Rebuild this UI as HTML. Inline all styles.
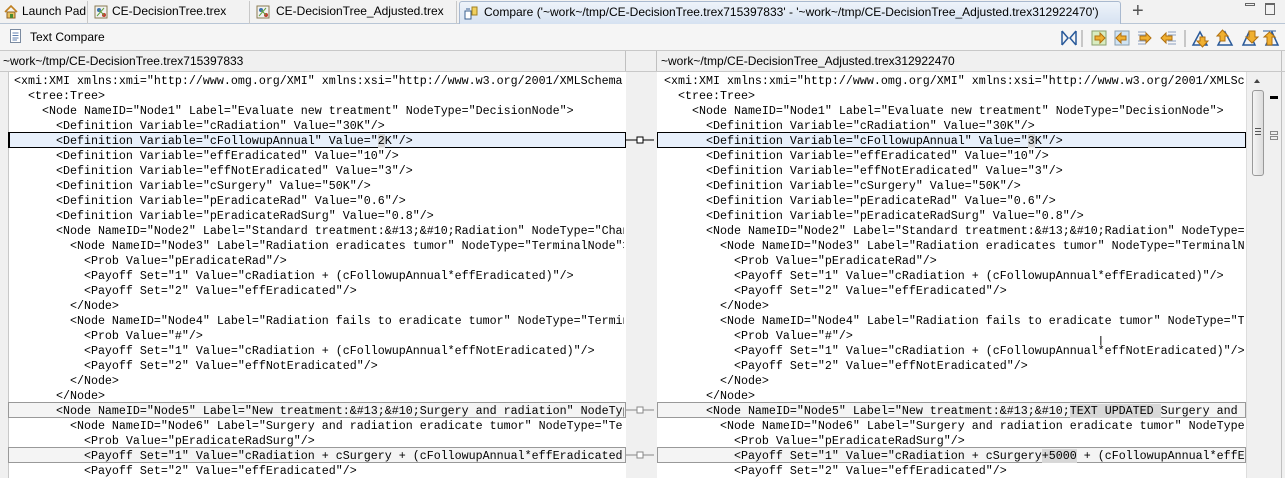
<!DOCTYPE html>
<html><head><meta charset="utf-8"><style>
*{margin:0;padding:0;box-sizing:border-box}
body{width:1285px;height:478px;overflow:hidden;background:#f0f0f0;font-family:"Liberation Sans",sans-serif;font-size:12px;color:#000;position:relative}
.abs{position:absolute}
.tabbar{left:0;top:0;width:1285px;height:24px;background:#f2f2f2;border-bottom:1px solid #b9c6d6}
.tab{top:1px;height:23px;line-height:21px;font-size:12px;padding-left:22px;border-right:1px solid #c8c8c8}
.ico{position:absolute;left:4px;top:4px;width:14px;height:14px}
.code{font-family:"Liberation Mono",monospace;font-size:11.67px;line-height:15px;white-space:pre;color:#000}
.pane{background:#fff;overflow:hidden}
.hl{background:#e8f0fb;border:1px solid #000}
.hl2{background:#f4f4f4;border:1px solid #999}
.gr{background:#d8d8d8}
</style></head><body>
<div class="abs tabbar"></div>
<div class="abs tab" style="left:0;width:88px;"><svg class="ico" viewBox="0 0 14 14"><path d="M1 7L7 1L13 7" fill="none" stroke="#c08020" stroke-width="1.6"/><rect x="3" y="7" width="8" height="6" fill="#e8c060" stroke="#906020"/><rect x="6" y="9" width="3" height="4" fill="#4a8a30"/></svg>Launch Pad</div>
<div class="abs tab" style="left:90px;width:160px;"><svg class="ico" viewBox="0 0 14 14"><rect x="1" y="1" width="12" height="12" fill="none" stroke="#8a7a50"/><circle cx="5" cy="5" r="2" fill="#3a70b0"/><circle cx="10" cy="10" r="2" fill="#c04030"/><path d="M5 5L10 10M3 11L10 3" stroke="#60a040"/></svg>CE-DecisionTree.trex</div>
<div class="abs tab" style="left:252px;width:205px;padding-left:24px"><svg class="ico" viewBox="0 0 14 14"><rect x="1" y="1" width="12" height="12" fill="none" stroke="#8a7a50"/><circle cx="5" cy="5" r="2" fill="#3a70b0"/><circle cx="10" cy="10" r="2" fill="#c04030"/><path d="M5 5L10 10M3 11L10 3" stroke="#60a040"/></svg>CE-DecisionTree_Adjusted.trex</div>
<div class="abs tab" style="left:459px;width:662px;background:linear-gradient(#eef3fa,#d6e2f1);border:1px solid #a9b9cf;border-bottom:none;padding-left:24px;border-radius:3px 3px 0 0"><svg class="ico" viewBox="0 0 14 14"><rect x="1" y="5" width="6" height="8" fill="#fff" stroke="#3a6090"/><rect x="8" y="1" width="5" height="8" fill="#f0d060" stroke="#a08020"/><path d="M2 3H6" stroke="#3a6090"/></svg>Compare ('~work~/tmp/CE-DecisionTree.trex715397833' - '~work~/tmp/CE-DecisionTree_Adjusted.trex312922470') <span style="margin-left:10px;color:#777">✕</span></div>
<div class="abs" style="left:1132px;top:0;font-size:20px;line-height:22px;color:#555">+</div>
<div class="abs" style="left:1245px;top:3px;width:10px;height:3px;border:1px solid #666"></div>
<div class="abs" style="left:1265px;top:3px;width:10px;height:12px;border:1px solid #666;border-top-width:2px"></div>

<div class="abs" style="left:0;top:24px;width:1285px;height:26px;background:#f5f5f5"></div>
<svg class="abs" style="left:10px;top:29px" width="12" height="14" viewBox="0 0 12 14"><rect x="0.5" y="0.5" width="10" height="13" fill="#fff" stroke="#7a8aa0"/><path d="M2.5 4H8.5M2.5 6.5H8.5M2.5 9H8.5M2.5 11H7" stroke="#6080b0"/></svg>
<div class="abs" style="left:30px;top:30px;font-size:12px">Text Compare</div>
<svg class="abs" style="left:1058px;top:27px" width="227" height="22" viewBox="0 0 227 22">
<path d="M4 4V18M4 4L10 11L4 18M18 4V18M18 4L12 11L18 18" fill="none" stroke="#2a5a9a" stroke-width="1.5"/>
<path d="M24 3V20" stroke="#999"/>
<rect x="34" y="4" width="14" height="14" fill="#d8ecc0" stroke="#8aa070"/><path d="M37 9H42V6L47 11L42 16V13H37Z" fill="#f0b030" stroke="#b07010"/>
<rect x="57" y="4" width="14" height="14" fill="#d0e4f4" stroke="#8aa0b0"/><path d="M68 9H63V6L58 11L63 16V13H68Z" fill="#f0b030" stroke="#b07010"/>
<path d="M80 5H88M80 8H88M80 14H88M80 17H88" stroke="#8aa0c0"/><path d="M82 9H88V6L93 11L88 16V13H82Z" fill="#f0b030" stroke="#b07010"/>
<path d="M110 5H118M110 8H118M110 14H118M110 17H118" stroke="#8aa0c0"/><path d="M114 9H108V6L103 11L108 16V13H114Z" fill="#f0b030" stroke="#b07010"/>
<path d="M127 3V20" stroke="#999"/>
<path d="M135 18L142 5L149 18Z" fill="none" stroke="#2a5a9a" stroke-width="1.5"/><path d="M142 10H147V14H150L144.5 20L139 14H142Z" fill="#f0b030" stroke="#b07010"/>
<path d="M160 18L167 5L174 18Z" fill="none" stroke="#2a5a9a" stroke-width="1.5"/><path d="M162 14V9H159L164.5 3L170 9H167V14Z" fill="#f0b030" stroke="#b07010"/>
<path d="M185 18L191 5L197 18Z" fill="none" stroke="#2a5a9a" stroke-width="1.5"/><path d="M191 4H197V10H200L194 16L188 10H191Z" fill="#f0b030" stroke="#b07010"/>
<path d="M208 18L214 5L220 18Z" fill="none" stroke="#2a5a9a" stroke-width="1.5"/><path d="M209 18V10H206L211.5 5L217 10H214V18Z" fill="#f0b030" stroke="#b07010"/><path d="M205 4H218" stroke="#2a5a9a"/>
</svg>

<div class="abs" style="left:0;top:50px;width:1285px;height:1px;background:#c8c8c8"></div>
<div class="abs" style="left:3px;top:51px;width:623px;height:21px;background:#f0f0f0;border-right:1px solid #c0c0c0;line-height:21px;font-size:12px">~work~/tmp/CE-DecisionTree.trex715397833</div>
<div class="abs" style="left:656px;top:51px;width:625px;height:21px;background:#f0f0f0;border-left:1px solid #c0c0c0;line-height:21px;font-size:12px;padding-left:4px">~work~/tmp/CE-DecisionTree_Adjusted.trex312922470</div>
<div class="abs" style="left:1281px;top:51px;width:1px;height:427px;background:#c0c0c0"></div>
<div class="abs" style="left:0;top:71px;width:1285px;height:1px;background:#c8c8c8"></div>

<div class="abs pane" style="left:8px;top:72px;width:618px;height:406px;border-left:1px solid #c8c8c8"></div>
<div class="abs hl" style="left:8px;top:132px;width:618px;height:16px"></div>
<div class="abs" style="left:9px;top:133px;width:2px;height:14px;border-left:1px solid #000"></div>
<div class="abs hl2" style="left:8px;top:402px;width:618px;height:16px"></div>
<div class="abs hl2" style="left:8px;top:447px;width:618px;height:16px"></div>
<div class="abs code" style="left:14px;top:74px;width:610px;height:404px;overflow:hidden">&lt;xmi:XMI xmlns:xmi="http://www.omg.org/XMI" xmlns:xsi="http://www.w3.org/2001/XMLSchema-instance"
  &lt;tree:Tree&gt;
    &lt;Node NameID="Node1" Label="Evaluate new treatment" NodeType="DecisionNode"&gt;
      &lt;Definition Variable="cRadiation" Value="30K"/&gt;
      &lt;Definition Variable="cFollowupAnnual" Value="<span class="gr">2</span>K"/&gt;
      &lt;Definition Variable="effEradicated" Value="10"/&gt;
      &lt;Definition Variable="effNotEradicated" Value="3"/&gt;
      &lt;Definition Variable="cSurgery" Value="50K"/&gt;
      &lt;Definition Variable="pEradicateRad" Value="0.6"/&gt;
      &lt;Definition Variable="pEradicateRadSurg" Value="0.8"/&gt;
      &lt;Node NameID="Node2" Label="Standard treatment:&amp;#13;&amp;#10;Radiation" NodeType="ChanceNode"&gt;
        &lt;Node NameID="Node3" Label="Radiation eradicates tumor" NodeType="TerminalNode"&gt;
          &lt;Prob Value="pEradicateRad"/&gt;
          &lt;Payoff Set="1" Value="cRadiation + (cFollowupAnnual*effEradicated)"/&gt;
          &lt;Payoff Set="2" Value="effEradicated"/&gt;
        &lt;/Node&gt;
        &lt;Node NameID="Node4" Label="Radiation fails to eradicate tumor" NodeType="TerminalNode"&gt;
          &lt;Prob Value="#"/&gt;
          &lt;Payoff Set="1" Value="cRadiation + (cFollowupAnnual*effNotEradicated)"/&gt;
          &lt;Payoff Set="2" Value="effNotEradicated"/&gt;
        &lt;/Node&gt;
      &lt;/Node&gt;
      &lt;Node NameID="Node5" Label="New treatment:&amp;#13;&amp;#10;Surgery and radiation" NodeType="ChanceNode"&gt;
        &lt;Node NameID="Node6" Label="Surgery and radiation eradicate tumor" NodeType="TerminalNode"&gt;
          &lt;Prob Value="pEradicateRadSurg"/&gt;
          &lt;Payoff Set="1" Value="cRadiation + cSurgery + (cFollowupAnnual*effEradicated)"/&gt;
          &lt;Payoff Set="2" Value="effEradicated"/&gt;</div>

<svg class="abs" style="left:624px;top:130px" width="34" height="340" viewBox="0 0 34 340">
<path d="M2 10H30" stroke="#000"/><rect x="13" y="7" width="6" height="6" fill="#fff" stroke="#000"/>
<path d="M2 280H30" stroke="#888"/><rect x="13" y="277" width="6" height="6" fill="#fff" stroke="#888"/>
<path d="M2 325H30" stroke="#888"/><rect x="13" y="322" width="6" height="6" fill="#fff" stroke="#888"/>
</svg>

<div class="abs pane" style="left:657px;top:72px;width:589px;height:406px"></div>
<div class="abs hl" style="left:657px;top:132px;width:589px;height:16px"></div>
<div class="abs hl2" style="left:657px;top:402px;width:589px;height:16px"></div>
<div class="abs hl2" style="left:657px;top:447px;width:589px;height:16px"></div>
<div class="abs code" style="left:664px;top:74px;width:580px;height:404px;overflow:hidden">&lt;xmi:XMI xmlns:xmi="http://www.omg.org/XMI" xmlns:xsi="http://www.w3.org/2001/XMLSchema-instance"
  &lt;tree:Tree&gt;
    &lt;Node NameID="Node1" Label="Evaluate new treatment" NodeType="DecisionNode"&gt;
      &lt;Definition Variable="cRadiation" Value="30K"/&gt;
      &lt;Definition Variable="cFollowupAnnual" Value="<span class="gr">3</span>K"/&gt;
      &lt;Definition Variable="effEradicated" Value="10"/&gt;
      &lt;Definition Variable="effNotEradicated" Value="3"/&gt;
      &lt;Definition Variable="cSurgery" Value="50K"/&gt;
      &lt;Definition Variable="pEradicateRad" Value="0.6"/&gt;
      &lt;Definition Variable="pEradicateRadSurg" Value="0.8"/&gt;
      &lt;Node NameID="Node2" Label="Standard treatment:&amp;#13;&amp;#10;Radiation" NodeType="ChanceNode"&gt;
        &lt;Node NameID="Node3" Label="Radiation eradicates tumor" NodeType="TerminalNode"&gt;
          &lt;Prob Value="pEradicateRad"/&gt;
          &lt;Payoff Set="1" Value="cRadiation + (cFollowupAnnual*effEradicated)"/&gt;
          &lt;Payoff Set="2" Value="effEradicated"/&gt;
        &lt;/Node&gt;
        &lt;Node NameID="Node4" Label="Radiation fails to eradicate tumor" NodeType="TerminalNode"&gt;
          &lt;Prob Value="#"/&gt;
          &lt;Payoff Set="1" Value="cRadiation + (cFollowupAnnual*effNotEradicated)"/&gt;
          &lt;Payoff Set="2" Value="effNotEradicated"/&gt;
        &lt;/Node&gt;
      &lt;/Node&gt;
      &lt;Node NameID="Node5" Label="New treatment:&amp;#13;&amp;#10;<span class="gr">TEXT UPDATED </span>Surgery and radiation" NodeType="ChanceNode"&gt;
        &lt;Node NameID="Node6" Label="Surgery and radiation eradicate tumor" NodeType="TerminalNode"&gt;
          &lt;Prob Value="pEradicateRadSurg"/&gt;
          &lt;Payoff Set="1" Value="cRadiation + cSurgery<span class="gr">+5000</span> + (cFollowupAnnual*effEradicated)"/&gt;
          &lt;Payoff Set="2" Value="effEradicated"/&gt;</div>
<div class="abs" style="left:1099px;top:333px;font-size:13px;color:#333">I</div>

<div class="abs" style="left:1246px;top:72px;width:21px;height:406px;background:#f0f0f0;border-left:1px solid #ddd"></div>
<div class="abs" style="left:1254px;top:79px;width:0;height:0;border:3px solid transparent;border-bottom:4px solid #444;border-top:none"></div>
<div class="abs" style="left:1252px;top:90px;width:12px;height:86px;border:1px solid #999;border-radius:3px;background:linear-gradient(90deg,#f4f4f4,#dcdcdc)"></div>
<div class="abs" style="left:1255px;top:128px;width:6px;height:1px;background:#555;box-shadow:0 3px 0 #555,0 6px 0 #555"></div>
<div class="abs" style="left:1270px;top:96px;width:8px;height:3px;background:#000"></div>
<div class="abs" style="left:1270px;top:131px;width:8px;height:4px;border:1px solid #888"></div>
<div class="abs" style="left:1270px;top:136px;width:8px;height:4px;border:1px solid #888"></div>
</body></html>
